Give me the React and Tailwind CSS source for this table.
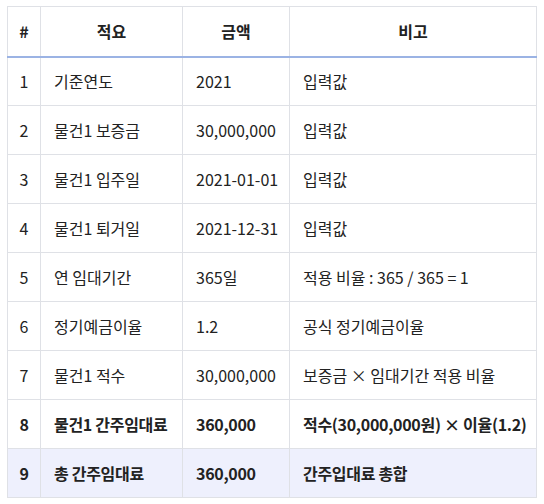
import React from "react";

const rows = [
  ["1", "기준연도", "2021", "입력값"],
  ["2", "물건1 보증금", "30,000,000", "입력값"],
  ["3", "물건1 입주일", "2021-01-01", "입력값"],
  ["4", "물건1 퇴거일", "2021-12-31", "입력값"],
  ["5", "연 임대기간", "365일", "적용 비율 : 365 / 365 = 1"],
  ["6", "정기예금이율", "1.2", "공식 정기예금이율"],
  ["7", "물건1 적수", "30,000,000", "보증금 × 임대기간 적용 비율"],
  ["8", "물건1 간주임대료", "360,000", "적수(30,000,000원) × 이율(1.2)", true],
  ["9", "총 간주임대료", "360,000", "간주입대료 총합", true, true],
];

const App = () => {
  return (
    <div
      className="w-[544px] h-[504px] bg-white pt-[6px] pl-[7px] text-[16px] text-[#222]"
      style={{ fontFamily: '"Noto Sans CJK KR", "Noto Sans", sans-serif' }}
    >
      <table className="w-[530px] border-collapse table-fixed">
        <colgroup>
          <col className="w-[33px]" />
          <col className="w-[142px]" />
          <col className="w-[107px]" />
          <col />
        </colgroup>
        <thead>
          <tr className="h-[50px] font-bold">
            <th className="border border-[#dfe1e6] border-b-2 border-b-[#9bb3e4] text-center">#</th>
            <th className="border border-[#dfe1e6] border-b-2 border-b-[#9bb3e4] text-center">적요</th>
            <th className="border border-[#dfe1e6] border-b-2 border-b-[#9bb3e4] text-center">금액</th>
            <th className="border border-[#dfe1e6] border-b-2 border-b-[#9bb3e4] text-center">비고</th>
          </tr>
        </thead>
        <tbody>
          {rows.map(([no, title, amount, note, bold, total]) => (
            <tr
              key={no}
              className={`h-[49px] ${bold ? "font-bold tracking-[-0.3px]" : ""} ${total ? "bg-[#eef0fd]" : ""}`}
            >
              <td className="border border-[#dfe1e6] text-center">{no}</td>
              <td className="border border-[#dfe1e6] pl-[13px] whitespace-nowrap">{title}</td>
              <td className="border border-[#dfe1e6] pl-[13px] whitespace-nowrap">{amount}</td>
              <td className="border border-[#dfe1e6] pl-[13px] whitespace-nowrap">{note}</td>
            </tr>
          ))}
        </tbody>
      </table>
    </div>
  );
};

export default App;
